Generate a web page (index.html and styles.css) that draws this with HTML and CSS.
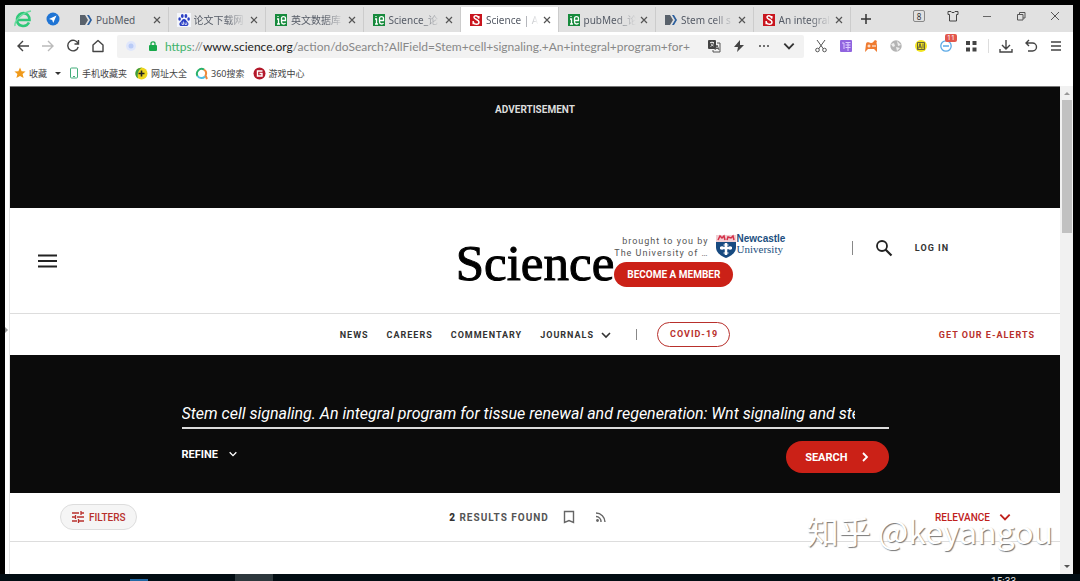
FILE: index.html
```html
<!DOCTYPE html>
<html lang="en">
<head>
    <meta charset="UTF-8">
    <meta name="viewport" content="width=device-width, initial-scale=1.0">
    <title>Science | AAAS</title>
    <link rel="stylesheet" href="styles.css">
</head>
<body>
    <!-- Shared icons -->
    <svg class="sprite" aria-hidden="true">
        <symbol id="close" viewBox="0 0 10 10"><path d="M2 2l6 6M8 2l-6 6" stroke="#555" stroke-width="1.2" fill="none"/></symbol>
        <symbol id="fav-pubmed" viewBox="0 0 14 14"><path d="M1 2h5l3 5-3 5H1z" fill="#59616b"/><path d="M8 2h2l3 5-3 5H8l3-5z" fill="#2b5f9e"/></symbol>
        <symbol id="fav-ie" viewBox="0 0 14 14"><rect x="1" y="1" width="12" height="12" fill="#168a3c"/><path d="M4 3v1M3 6h1.500v5M3 11h3M7.500 7.500h4V5.500c0-2.500-4-2.500-4 0v3c0 3 3 3 4 1.500" stroke="#fff" stroke-width="1.300" fill="none"/></symbol>
        <symbol id="fav-science" viewBox="0 0 14 14"><rect x="1" y="1" width="12" height="12" fill="#c9151e"/><path d="M9.800 3v2.600C9 2 5 2 5 4.300c0 2.200 5 2.300 5 4.700 0 3-4.500 3-5.700.2M4.200 8v3.200" stroke="#fff" stroke-width="1.500" fill="none"/></symbol>
        <symbol id="chevron" viewBox="0 0 12 12"><path d="M2 4l4 4 4-4" stroke="currentColor" stroke-width="1.600" fill="none"/></symbol>
    </svg>

    <div class="window">
        <div class="tab-bar">
            <div class="launchers">
                <svg width="20" height="20" viewBox="0 0 20 20"><path d="M4 11h12.500C16.500 2 5 2 4 10c-.5 8 9 9 12 3.500" stroke="#2fc878" stroke-width="2.600" fill="none"/><path d="M2 17C1 12 10 3 18 2" stroke="#6adb9f" stroke-width="1.500" fill="none"/></svg>
                <svg width="14" height="14" viewBox="0 0 14 14"><circle cx="7" cy="7" r="6.500" fill="#1f74d4"/><path d="M10.500 3.500L3 7l3.200 1 1 3z" fill="#fff"/></svg>
            </div>
            <div class="tabs">
                <div class="tab"><svg class="fav"><use href="#fav-pubmed"/></svg><span class="tab-name">PubMed</span><button class="icon-btn" aria-label="Close tab"><svg width="10" height="10"><use href="#close"/></svg></button></div>
                <div class="tab"><svg class="fav" viewBox="0 0 14 14"><rect width="14" height="14" fill="#f4f6fb"/><g fill="#2a3fc4"><ellipse cx="2.600" cy="6" rx="1.300" ry="1.800"/><ellipse cx="5.300" cy="3" rx="1.400" ry="1.900"/><ellipse cx="8.900" cy="3" rx="1.400" ry="1.900"/><ellipse cx="11.600" cy="6" rx="1.300" ry="1.800"/><path d="M7 6c2 0 2.300 2 3.700 3.200C12.500 11 11 13.400 9 13H5c-2.500.4-3.500-2.200-1.700-3.800C4.700 8 5 6 7 6z"/></g><path d="M5 9.500v2h1.500v-3M8 9.500v2h1.700v-2" stroke="#fff" stroke-width=".7" fill="none"/></svg><span class="tab-name fade">论文下载网</span><button class="icon-btn" aria-label="Close tab"><svg width="10" height="10"><use href="#close"/></svg></button></div>
                <div class="tab"><svg class="fav"><use href="#fav-ie"/></svg><span class="tab-name fade">英文数据库</span><button class="icon-btn" aria-label="Close tab"><svg width="10" height="10"><use href="#close"/></svg></button></div>
                <div class="tab"><svg class="fav"><use href="#fav-ie"/></svg><span class="tab-name fade">Science_论</span><button class="icon-btn" aria-label="Close tab"><svg width="10" height="10"><use href="#close"/></svg></button></div>
                <div class="tab active"><svg class="fav"><use href="#fav-science"/></svg><span class="tab-name fade">Science | A</span><button class="icon-btn" aria-label="Close tab"><svg width="10" height="10"><use href="#close"/></svg></button></div>
                <div class="tab"><svg class="fav"><use href="#fav-ie"/></svg><span class="tab-name fade">pubMed_论</span><button class="icon-btn" aria-label="Close tab"><svg width="10" height="10"><use href="#close"/></svg></button></div>
                <div class="tab"><svg class="fav"><use href="#fav-pubmed"/></svg><span class="tab-name fade">Stem cell s</span><button class="icon-btn" aria-label="Close tab"><svg width="10" height="10"><use href="#close"/></svg></button></div>
                <div class="tab"><svg class="fav"><use href="#fav-science"/></svg><span class="tab-name fade">An integral</span><button class="icon-btn" aria-label="Close tab"><svg width="10" height="10"><use href="#close"/></svg></button></div>
            </div>
            <button class="icon-btn new-tab" aria-label="New tab"><svg width="12" height="12" viewBox="0 0 12 12"><path d="M6 1v10M1 6h10" stroke="#333" stroke-width="1.500"/></svg></button>
            <div class="window-controls">
                <button class="icon-btn tab-count">8</button>
                <button class="icon-btn" aria-label="Skin"><svg width="12" height="12" viewBox="0 0 12 12"><path d="M1 1.500h3c.5 1.500 3.500 1.500 4 0h3v3H9.500V11h-7V4.500H1z" stroke="#444" fill="none"/></svg></button>
                <button class="icon-btn" aria-label="Minimize"><svg width="12" height="12" viewBox="0 0 12 12"><path d="M2 6.500h8" stroke="#666"/></svg></button>
                <button class="icon-btn" aria-label="Restore"><svg width="12" height="12" viewBox="0 0 12 12"><path d="M2.500 4.500h5.500v5.500H2.500zM4.500 4.500v-2H10v5.500H8" stroke="#555" fill="none"/></svg></button>
                <button class="icon-btn" aria-label="Close"><svg width="12" height="12" viewBox="0 0 12 12"><path d="M2 2l8 8M10 2l-8 8" stroke="#555"/></svg></button>
            </div>
        </div>

        <div class="toolbar">
            <div class="nav-buttons">
                <button class="icon-btn" aria-label="Back"><svg width="14" height="14" viewBox="0 0 14 14"><path d="M13 7H2M7 2L2 7l5 5" stroke="#444" stroke-width="1.400" fill="none"/></svg></button>
                <button class="icon-btn" aria-label="Forward"><svg width="14" height="14" viewBox="0 0 14 14"><path d="M1 7h11M7 2l5 5-5 5" stroke="#bbb" stroke-width="1.400" fill="none"/></svg></button>
                <button class="icon-btn" aria-label="Reload"><svg width="14" height="14" viewBox="0 0 14 14"><path d="M12 4.500A5.300 5.300 0 1 0 12.200 8M12.500 1v4h-4" stroke="#444" stroke-width="1.400" fill="none"/></svg></button>
                <button class="icon-btn" aria-label="Home"><svg width="14" height="14" viewBox="0 0 14 14"><path d="M2 6l5-4.500L12 6v6.500H2z" stroke="#444" stroke-width="1.400" fill="none" stroke-linejoin="round"/></svg></button>
            </div>
            <div class="address">
                <svg width="12" height="12" viewBox="0 0 12 12"><circle cx="6" cy="6" r="5" fill="#dfe6fb"/><circle cx="6" cy="6" r="2.500" fill="#b9cbf7"/></svg>
                <svg class="lock" width="10" height="12" viewBox="0 0 10 12"><path d="M3 6V3.500c0-2.300 4-2.300 4 0V6" stroke="#17a84a" stroke-width="1.300" fill="none"/><rect x="1" y="5" width="8" height="6" rx="1" fill="#17a84a"/></svg>
                <div class="url" role="textbox" contenteditable="true" spellcheck="false" aria-label="Address"><span class="scheme">https</span>://<span class="host">www.science.org</span>/action/doSearch?AllField=Stem+cell+signaling.+An+integral+program+for+</div>
                <button class="icon-btn" aria-label="Translate"><svg width="14" height="14" viewBox="0 0 14 14"><rect x="1" y="1" width="8" height="9" rx="1" fill="#444"/><path d="M3 3.500h4M5 2.500v1M3.500 7.500c2-1 3-2.500 3-4M4 4.500c.5 1.500 1.500 2 2.500 2.500" stroke="#fff" stroke-width=".8" fill="none"/><path d="M10 4h3v9H6v-2M8 11l2-5 2 5M9 9.500h2" stroke="#555" fill="none"/></svg></button>
                <button class="icon-btn" aria-label="Speed mode"><svg width="14" height="14" viewBox="0 0 14 14"><path d="M8 1L2 8h4l-1 5 7-7H8z" fill="#444"/></svg></button>
                <button class="icon-btn" aria-label="More"><svg width="14" height="14" viewBox="0 0 14 14"><g fill="#444"><circle cx="3" cy="7" r="1"/><circle cx="7" cy="7" r="1"/><circle cx="11" cy="7" r="1"/></g></svg></button>
                <button class="icon-btn" aria-label="History"><svg width="14" height="14"><use href="#chevron"/></svg></button>
            </div>
            <div class="extensions">
                <button class="icon-btn" aria-label="Screenshot"><svg width="14" height="14" viewBox="0 0 14 14"><path d="M3 1l6.500 9M11 1L4.500 10" stroke="#555" fill="none"/><circle cx="3.500" cy="11" r="1.800" stroke="#555" fill="none"/><circle cx="10.500" cy="11" r="1.800" stroke="#555" fill="none"/></svg></button>
                <button class="icon-btn" aria-label="Dictionary"><svg width="14" height="14" viewBox="0 0 14 14"><rect x="1" y="1" width="12" height="12" rx="1" fill="#9064df"/><path d="M3 4h2v6M6.500 3.500h5M6.500 6h5M6.500 8.500h5M9 3.500V12" stroke="#ddcbff" fill="none"/></svg></button>
                <button class="icon-btn" aria-label="Games"><svg width="14" height="14" viewBox="0 0 14 14"><path d="M1 13L2 5c1-3 3-1 5-1s2-1 4-3l2 1c-1 2 0 2 0 5v6l-3-3H4z" fill="#ef7b31"/><path d="M3.500 7h3M5 5.500v3M9 6v2M11 6v2" stroke="#fff"/></svg></button>
                <button class="icon-btn" aria-label="Network"><svg width="14" height="14" viewBox="0 0 14 14"><circle cx="7" cy="7" r="5.700" fill="#b4b4b4"/><path d="M2 5l3-1 1 3-2 1zM8 2l4 4-3 1zM7 8l4 1-3 3z" fill="#eee"/></svg></button>
                <button class="icon-btn" aria-label="AI tools"><svg width="14" height="14" viewBox="0 0 14 14"><circle cx="7" cy="7" r="6" fill="#f2e422"/><path d="M3.500 3.500h7v7h-7zM4.500 9.500l1.500-5 1.500 5M5 8h2M9 4.500v5" stroke="#444" stroke-width=".8" fill="none"/></svg></button>
                <button class="icon-btn badged" aria-label="Ad filter"><svg width="14" height="14" viewBox="0 0 14 14"><circle cx="7" cy="7" r="5.200" stroke="#5ba9e6" stroke-width="1.300" fill="none"/><path d="M4 7h6" stroke="#5ba9e6" stroke-width="1.500"/></svg><span class="badge">11</span></button>
                <button class="icon-btn" aria-label="Extensions"><svg width="14" height="14" viewBox="0 0 14 14"><path d="M2 2h4v4H2zM8.500 2h4v4h-4zM2 8.500h4v4H2zM8.500 8.500h4v4h-4z" fill="#444"/></svg></button>
            </div>
            <div class="menu-buttons">
                <button class="icon-btn" aria-label="Downloads"><svg width="14" height="14" viewBox="0 0 14 14"><path d="M7 1v8M3 6l4 4 4-4M1 10v3h12v-3" stroke="#444" stroke-width="1.400" fill="none"/></svg></button>
                <button class="icon-btn" aria-label="Reopen tab"><svg width="14" height="14" viewBox="0 0 14 14"><path d="M5 1L2 4l3 3M2 4h6.500a4 4 0 0 1 0 8H4" stroke="#444" stroke-width="1.400" fill="none"/></svg></button>
                <button class="icon-btn" aria-label="Menu"><svg width="14" height="14" viewBox="0 0 14 14"><path d="M2 3h10M2 7h10M2 11h10" stroke="#444" stroke-width="1.400"/></svg></button>
            </div>
        </div>

        <div class="bookmarks">
            <a href="#"><svg width="12" height="12" viewBox="0 0 12 12"><path d="M6 .5l1.600 3.700 4 .3-3 2.600 1 4L6 9l-3.600 2.100 1-4-3-2.600 4-.3z" fill="#f09a1a"/></svg>收藏</a>
            <span class="caret"></span>
            <a href="#"><svg width="10" height="12" viewBox="0 0 10 12"><rect x="1.500" y="1" width="7" height="10" rx="1" stroke="#41ad79" fill="none"/><path d="M4 9.500h2" stroke="#41ad79"/></svg>手机收藏夹</a>
            <a href="#"><svg width="13" height="13" viewBox="0 0 13 13"><circle cx="6.500" cy="6.500" r="6" fill="#edd51c"/><path d="M3 11.500A6 6 0 0 1 3 1.500l4-1C3 3 2 7 3 11.500z" fill="#3a9d42"/><path d="M6.500 3.500v6M3.500 6.500h6" stroke="#222" stroke-width="1.600"/></svg>网址大全</a>
            <a href="#"><svg width="13" height="13" viewBox="0 0 13 13" fill="none" stroke-width="2"><path d="M2.500 9A4.800 4.800 0 0 1 9 2.500" stroke="#28b06a"/><path d="M9 2.500A4.800 4.800 0 0 1 10.500 8.500L12 12" stroke="#f0883c"/><path d="M10 9.500A4.800 4.800 0 0 1 2.500 9" stroke="#4fbde0"/></svg>360搜索</a>
            <a href="#"><svg width="13" height="13" viewBox="0 0 13 13"><circle cx="6.500" cy="6.500" r="6" fill="#b3182a"/><path d="M9.500 4h-5v5h4.500V6.500H6.500" stroke="#fff" stroke-width="1.400" fill="none"/></svg>游戏中心</a>
        </div>

        <div class="viewport">
            <div class="gutter"><span class="handle"></span></div>
            <div class="page">
                <div class="ad">ADVERTISEMENT</div>

                <header class="masthead">
                    <button class="icon-btn" aria-label="Open menu"><svg width="19" height="14" viewBox="0 0 19 14"><path d="M0 1.500h19M0 7h19M0 12.500h19" stroke="#222" stroke-width="2"/></svg></button>
                    <a class="logo" href="#">Science</a>
                    <div class="masthead-side">
                        <div class="member">
                            <div class="sponsor">
                                <p>brought to you by<br>The University of …</p>
                                <svg class="crest" width="22" height="25" viewBox="0 0 22 25"><path d="M1 1h20v12c0 6-5 9-10 11C6 22 1 19 1 13z" fill="#174a80"/><path d="M1 1h20v7H1z" fill="#f0cdd2"/><path d="M3 6l2-4 2 2 2-2 1 4M12 6l1-3 3 1 2-2 1 4" stroke="#d42f48" stroke-width="1.500" fill="none"/><path d="M11 9v12M5 14h12" stroke="#fff" stroke-width="2.500"/><path d="M8.500 11h5M8.500 19h5M7 12v4M15 12v4" stroke="#fff"/></svg>
                                <div class="uni"><strong>Newcastle</strong><span>University</span></div>
                            </div>
                            <button class="pill red">BECOME A MEMBER</button>
                        </div>
                        <div class="tools">
                            <span class="divider"></span>
                            <button class="icon-btn" aria-label="Search"><svg width="18" height="18" viewBox="0 0 18 18"><circle cx="7" cy="7" r="5" stroke="#222" stroke-width="1.800" fill="none"/><path d="M10.500 10.500l6 6" stroke="#222" stroke-width="2.200"/></svg></button>
                            <a href="#">LOG IN</a>
                        </div>
                    </div>
                </header>

                <nav class="site-nav">
                    <div class="links">
                        <a href="#">NEWS</a>
                        <a href="#">CAREERS</a>
                        <a href="#">COMMENTARY</a>
                        <button class="journals">JOURNALS <svg width="12" height="12"><use href="#chevron"/></svg></button>
                        <span class="divider short"></span>
                        <a class="covid" href="#">COVID-19</a>
                    </div>
                    <a class="alerts" href="#">GET OUR E-ALERTS</a>
                </nav>

                <form class="search">
                    <div class="search-inner">
                        <input type="text" aria-label="Search terms" value="Stem cell signaling. An integral program for tissue renewal and regeneration: Wnt signaling and stem cell control">
                        <div class="search-actions">
                            <button type="button" class="refine">REFINE <svg width="10" height="10"><use href="#chevron"/></svg></button>
                            <button type="button" class="pill red go">SEARCH <svg width="10" height="10" viewBox="0 0 10 10"><path d="M3 1l4 4-4 4" stroke="#fff" stroke-width="1.800" fill="none"/></svg></button>
                        </div>
                    </div>
                </form>

                <div class="results-bar">
                    <button class="filters"><svg width="14" height="12" viewBox="0 0 14 12"><path d="M1 2h7M10 2h3M10 0v4M1 6h3M6 6h7M4.500 4v4M1 10h5M8 10h5M7.500 8v4" stroke="#b8302c" stroke-width="1.300"/></svg>FILTERS</button>
                    <div class="found">
                        <span><b>2</b> RESULTS FOUND</span>
                        <button class="icon-btn" aria-label="Save search"><svg width="12" height="14" viewBox="0 0 12 14"><path d="M1.500 1.500h9v11L6 10.500l-4.500 2z" stroke="#666" stroke-width="1.400" fill="none"/></svg></button>
                        <button class="icon-btn" aria-label="RSS feed"><svg width="12" height="12" viewBox="0 0 12 12"><circle cx="2.500" cy="9.500" r="1.400" fill="#666"/><path d="M1 5.500a5 5 0 0 1 5 5.500M1 2a9 9 0 0 1 9 9" stroke="#666" stroke-width="1.400" fill="none"/></svg></button>
                    </div>
                    <label class="sort"><select aria-label="Sort by"><option>RELEVANCE</option><option>DATE</option></select><svg width="14" height="14"><use href="#chevron"/></svg></label>
                </div>
            </div>
            <div class="scrollbar"><span class="arrow up"></span><span class="thumb"></span><span class="arrow down"></span></div>
        </div>
        <div class="watermark">知乎 @keyangou</div>
    </div>

    <div class="taskbar">
        <span class="task blue"></span>
        <span class="task current"></span>
        <span class="clock">15:33</span>
    </div>
</body>
</html>
```
FILE: styles.css
```css
* {
    box-sizing: border-box;
}
body {
    margin: 0;
    height: 100vh;
    display: flex;
    flex-direction: column;
    overflow: hidden;
    background-color: #000;
    font-family: Roboto, "Liberation Sans", sans-serif;
    color: #333;
}
a {
    color: inherit;
    text-decoration: none;
}
button, select {
    padding: 0;
    border: none;
    background: none;
    color: inherit;
    font: inherit;
    letter-spacing: inherit;
    cursor: pointer;
}
svg {
    display: block;
    flex: none;
}
.sprite {
    position: absolute;
    width: 0;
    height: 0;
}
.icon-btn {
    display: flex;
    align-items: center;
    justify-content: center;
    flex: none;
}

/* Browser window */
.window {
    position: relative;
    flex: 1;
    min-height: 0;
    margin: 5px 7px 0 5px;
    display: flex;
    flex-direction: column;
    background-color: #fff;
}
.tab-bar, .toolbar, .bookmarks {
    flex: none;
    display: flex;
    align-items: center;
    font-family: "Noto Sans", "Noto Sans CJK SC", sans-serif;
}
.tab-bar {
    height: 27px;
    background-color: #e1e1e1;
}
.launchers {
    flex: none;
    width: 66px;
    display: flex;
    align-items: center;
    gap: 13px;
    padding-left: 8px;
}
.tabs {
    align-self: stretch;
    flex: 0 1 780px;
    min-width: 0;
    display: flex;
}
.tab {
    flex: 1 1 0;
    min-width: 0;
    display: flex;
    align-items: center;
    gap: 3px;
    margin-top: 2px;
    padding: 0 6px 0 8px;
    border-right: 1px solid #ccc;
    font-size: 10px;
    color: #555b66;
}
.tab.active {
    background-color: #fff;
}
.fav {
    width: 14px;
    height: 14px;
}
.tab-name {
    flex: 1;
    white-space: nowrap;
    overflow: hidden;
}
.fade {
    -webkit-mask-image: linear-gradient(to right, #000 60%, transparent);
    mask-image: linear-gradient(to right, #000 60%, transparent);
}
.new-tab {
    margin-left: 9px;
}
.window-controls {
    margin-left: auto;
    padding: 0 12px 5px 0;
    display: flex;
    align-items: center;
    gap: 22px;
}
.tab-count {
    width: 12px;
    height: 12px;
    border: 1px solid #888;
    border-radius: 2px;
    font-size: 8px;
}

.toolbar {
    height: 28px;
}
.nav-buttons {
    display: flex;
    gap: 11px;
    padding: 0 12px 0 11px;
}
.address {
    flex: 1;
    min-width: 0;
    height: 23px;
    display: flex;
    align-items: center;
    gap: 11px;
    padding: 0 8px;
    background-color: #f2f2f2;
    border-radius: 2px;
}
.lock {
    margin-right: -4px;
}
.url {
    flex: 1;
    min-width: 0;
    overflow: hidden;
    white-space: nowrap;
    font-family: Lato, sans-serif;
    font-size: 12px;
    color: #888;
}
.scheme {
    color: #3db36b;
}
.host {
    color: #222;
}
.extensions, .menu-buttons {
    display: flex;
    gap: 11px;
    padding: 0 10px;
}
.menu-buttons {
    border-left: 1px solid #ddd;
}
.badged {
    position: relative;
}
.badge {
    position: absolute;
    top: -5px;
    left: 6px;
    padding: 0 2px;
    background-color: #e2574c;
    border-radius: 2px;
    color: #fff;
    font-size: 7px;
    line-height: 8px;
}

.bookmarks {
    height: 26px;
    gap: 8px;
    padding-left: 9px;
    font-size: 9px;
    color: #444;
}
.bookmarks a {
    display: flex;
    align-items: center;
    gap: 3px;
}
.caret {
    border: 3px solid transparent;
    border-top-color: #333;
    border-bottom: none;
}

/* Page area */
.viewport {
    flex: 1;
    min-height: 0;
    display: flex;
}
.gutter {
    flex: none;
    width: 5px;
    display: flex;
    align-items: center;
    border-right: 1px solid #e5e5e5;
}
.handle {
    border: 3px solid transparent;
    border-left-color: #999;
    border-right: none;
}
.page {
    flex: 1;
    min-width: 0;
    overflow: hidden;
    border-top: 1px solid #777;
}
.scrollbar {
    flex: none;
    width: 13px;
    display: flex;
    flex-direction: column;
    align-items: center;
    padding: 6px 0;
    background-color: #f1f1f1;
}
.arrow {
    border: 3px solid transparent;
}
.up {
    border-top: none;
    border-bottom-color: #999;
}
.down {
    margin-top: auto;
    border-bottom: none;
    border-top-color: #555;
}
.thumb {
    width: 10px;
    height: 28%;
    margin-top: 5px;
    background-color: #c1c1c1;
}

.ad {
    height: 121px;
    padding-top: 17px;
    background-color: #0b0b0b;
    color: #ddd;
    text-align: center;
    font-size: 10px;
    font-weight: 700;
    line-height: 12px;
}
.masthead {
    display: grid;
    grid-template-columns: 1fr auto 1fr;
    height: 106px;
    border-bottom: 1px solid #ddd;
}
.masthead > .icon-btn {
    justify-self: start;
    align-self: center;
    padding-left: 28px;
}
.logo {
    align-self: center;
    padding-top: 4px;
    font-family: "Liberation Serif", serif;
    font-size: 51px;
    line-height: 60px;
    color: #000;
    -webkit-text-stroke: 1px #000;
}
.masthead-side {
    display: flex;
    justify-content: space-between;
    align-items: flex-start;
    padding: 26px 111px 0 0;
}
.sponsor {
    display: flex;
    gap: 6px;
}
.sponsor p {
    margin: 1px 0 0;
    color: #555;
    font-size: 9px;
    letter-spacing: 1px;
    line-height: 12px;
    text-align: right;
    white-space: nowrap;
}
.uni {
    display: flex;
    flex-direction: column;
    margin-left: -6px;
    font-family: "Liberation Sans", sans-serif;
    font-size: 10px;
    line-height: 10px;
    color: #1c4f80;
}
.uni span {
    font-family: "Liberation Serif", serif;
    font-size: 11px;
}
.pill {
    display: flex;
    align-items: center;
    justify-content: center;
    height: 25px;
    padding: 0 13px;
    border-radius: 16px;
    font-size: 10px;
    font-weight: 700;
}
.red {
    background-color: #cb2117;
    color: #fff;
}
.member .pill {
    margin-top: 3px;
}
.tools {
    display: flex;
    align-items: center;
    gap: 22px;
    padding-top: 5px;
    font-size: 9px;
    font-weight: 700;
    letter-spacing: 1px;
}
.divider {
    width: 1px;
    height: 14px;
    background-color: #888;
}
.short {
    height: 11px;
}

.site-nav {
    display: grid;
    grid-template-columns: 1fr auto 1fr;
    align-items: center;
    height: 41px;
    font-size: 9px;
    font-weight: 700;
    letter-spacing: 1px;
}
.links {
    grid-column: 2;
    display: flex;
    align-items: center;
    gap: 18px;
}
.journals {
    display: flex;
    align-items: center;
    gap: 6px;
    margin-right: 6px;
}
.covid {
    margin-left: 2px;
    padding: 0 11px 0 12px;
    border: 1px solid #b8302c;
    border-radius: 13px;
    line-height: 23px;
    color: #b8302c;
}
.alerts {
    justify-self: end;
    padding-right: 25px;
    color: #b8302c;
}

.search {
    height: 138px;
    padding: 44px 20px 0;
    background-color: #0b0b0b;
}
.search-inner {
    max-width: 707px;
    margin: 0 auto;
}
.search input {
    display: block;
    width: 100%;
    height: 30px;
    padding: 0 34px 0 0;
    border: none;
    border-bottom: 2px solid #ddd;
    background: none;
    color: #fff;
    font-family: Roboto, sans-serif;
    font-size: 16px;
    font-style: italic;
}
.search-actions {
    display: flex;
    justify-content: space-between;
    align-items: center;
    padding-top: 12px;
    color: #fff;
    font-size: 11px;
    font-weight: 700;
}
.refine {
    display: flex;
    align-items: center;
    gap: 10px;
    padding-bottom: 6px;
}
.go {
    gap: 12px;
    height: 32px;
    padding: 0 19px;
    font-size: 11px;
}

.results-bar {
    display: grid;
    grid-template-columns: 1fr auto 1fr;
    align-items: center;
    height: 49px;
    padding: 0 48px 0 50px;
    border-bottom: 1px solid #ddd;
    font-size: 10px;
    font-weight: 500;
}
.filters {
    justify-self: start;
    display: flex;
    align-items: center;
    gap: 4px;
    height: 26px;
    padding: 0 10px;
    border: 1px solid #ddd;
    border-radius: 13px;
    background-color: #f5f5f5;
    color: #b8302c;
}
.found {
    display: flex;
    align-items: center;
    gap: 14px;
    padding-right: 16px;
    color: #555;
    font-weight: 700;
    letter-spacing: 1px;
}
.found .icon-btn + .icon-btn {
    margin-left: 6px;
}
.found b {
    color: #333;
}
.sort {
    justify-self: end;
    display: flex;
    align-items: center;
    gap: 8px;
    color: #c0211c;
}
.sort select {
    appearance: none;
}

.watermark {
    position: absolute;
    right: 20px;
    bottom: 20px;
    font-family: "Noto Sans CJK SC", sans-serif;
    font-size: 32px;
    line-height: 48px;
    color: #fff;
    text-shadow: 1px 1px 1px #777;
    pointer-events: none;
}

.taskbar {
    flex: none;
    display: flex;
    height: 7px;
    overflow: hidden;
    padding: 0 10px 0 130px;
    background-color: #020d13;
}
.task {
    width: 38px;
}
.blue {
    width: 18px;
    height: 2px;
    margin: 5px 87px 0 0;
    background-color: #2269a5;
}
.current {
    background-color: #2d383d;
}
.clock {
    margin: 2px 54px 0 auto;
    font-size: 10px;
    line-height: 12px;
    color: #ddd;
}
```
